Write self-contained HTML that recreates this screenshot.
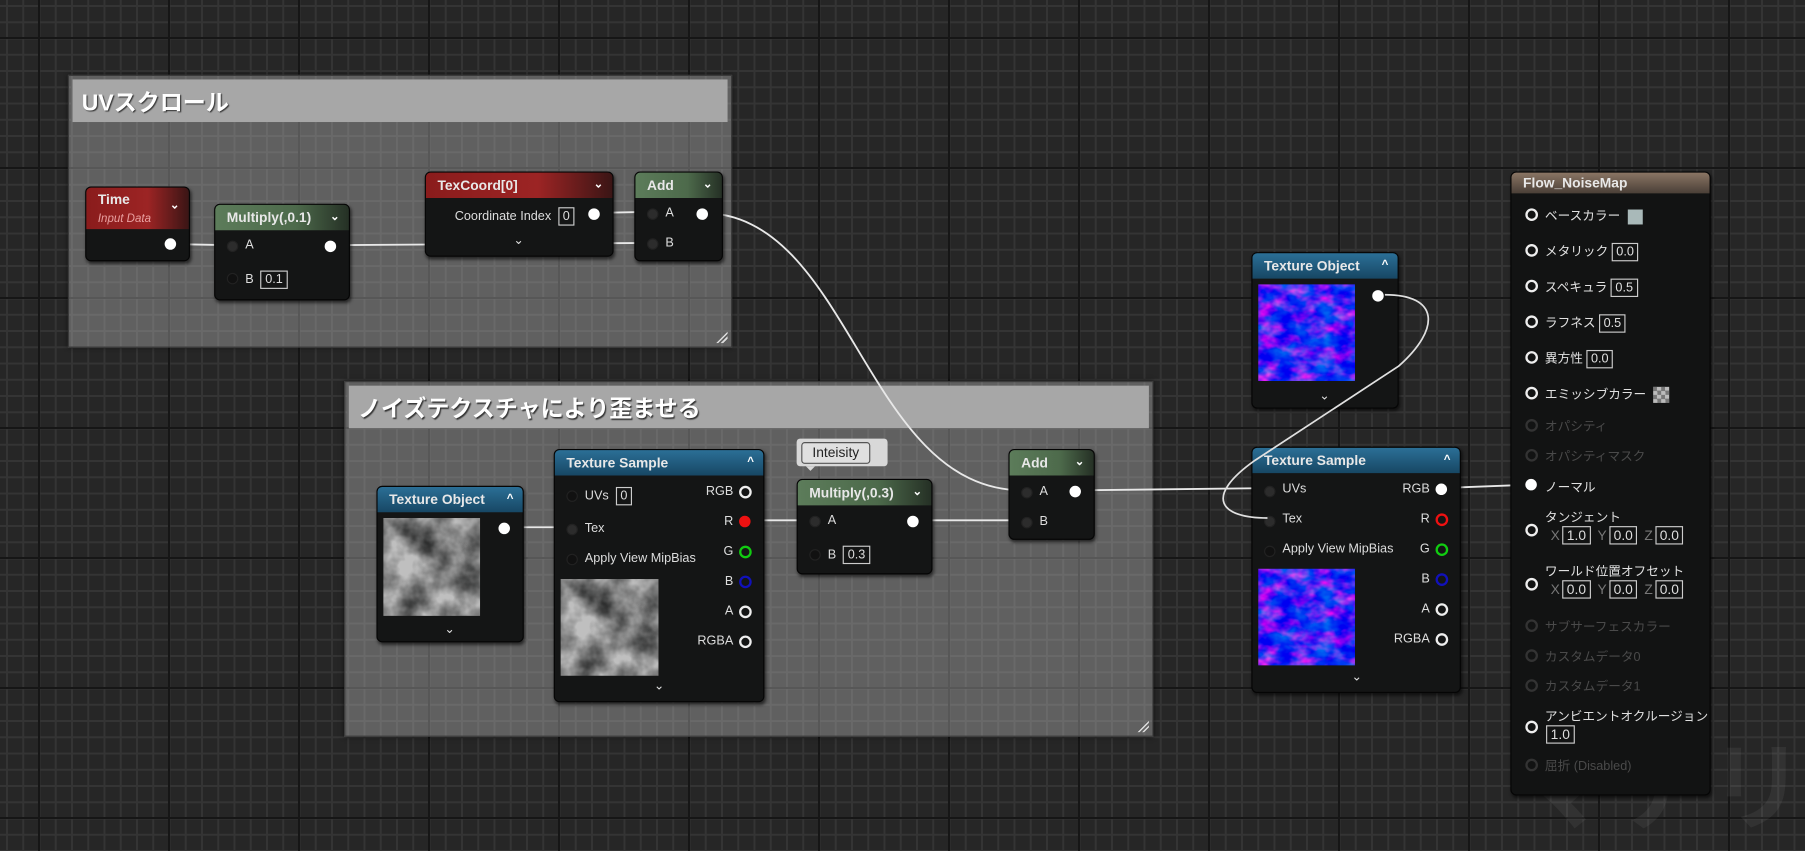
<!DOCTYPE html>
<html><head><meta charset="utf-8">
<style>
html,body{margin:0;padding:0;width:1805px;height:781px;overflow:hidden;}
body{background-color:#262626;
background-image:
linear-gradient(90deg,#161616 0 2px,transparent 2px),
linear-gradient(0deg,#161616 0 2px,transparent 2px),
linear-gradient(90deg,#343434 0 2px,transparent 2px),
linear-gradient(0deg,#343434 0 2px,transparent 2px);
background-size:130px 130px,130px 130px,16.25px 16.25px,16.25px 16.25px;
background-position:38px 0,0 39px,6px 0,0 7px;
font-family:"Liberation Sans","Noto Sans CJK JP",sans-serif;}
#w{position:absolute;left:0;top:0;width:1568px;height:678px;transform:scale(1.1512);transform-origin:0 0;}
.cm{position:absolute;background:rgba(185,185,185,0.4);border:1px solid #3a3a3a;box-shadow:0 0 4px rgba(0,0,0,.6);}
.cm .h{position:absolute;left:3px;right:3px;top:3px;background:#a7a7a7;color:#fff;font-weight:bold;font-size:20px;padding:4px 8px;text-shadow:1px 1px 1px #333;}
.cm .rs{position:absolute;right:3px;bottom:3px;width:10px;height:10px;background:linear-gradient(135deg,transparent 50%,#ddd 50%,#ddd 60%,transparent 60%,transparent 70%,#ddd 70%,#ddd 80%,transparent 80%);}
.n{position:absolute;background:#141515;border:1px solid #050505;border-radius:5px;box-shadow:1px 2px 3px rgba(0,0,0,.6);color:#ddd;font-size:11px;}
.n .t{height:22px;border-radius:4px 4px 0 0;color:#e8e8e8;font-weight:bold;font-size:12px;line-height:22px;padding-left:10px;position:relative;}
.red{background:linear-gradient(90deg,#8a1c1c,#9c2424 60%,#3a1515);}
.grn{background:linear-gradient(90deg,#5c7c5a,#4d6a4b 60%,#253025);}
.blu{background:linear-gradient(180deg,#2b6f96,#174764);}
.brn{background:linear-gradient(180deg,#8a7564,#4a3f37);}
.t .ar{position:absolute;right:8px;top:0;font-size:10px;color:#fff;}
.a{position:absolute;font-size:11px;color:#ddd;white-space:nowrap;}
.pi{position:absolute;width:8px;height:8px;border-radius:50%;background:#2c2c2c;border:1px solid #222;}
.po{position:absolute;width:7px;height:7px;border-radius:50%;border:2px solid #eee;}
.pf{position:absolute;width:10px;height:10px;border-radius:50%;background:#fff;}
.bx{display:inline-block;border:1px solid #ccc;padding:0 3px;line-height:14px;margin-left:3px;}
.chev{position:absolute;color:#ddd;font-size:11px;}
.fr{position:absolute;left:12px;font-size:11px;color:#e0e0e0;white-space:nowrap;}
.fr.d{color:#4a4a4a;}
.fr .po{left:0;top:2px}
.fr span.l{margin-left:17px}
.xyz{position:absolute;font-size:12px;color:#ddd;white-space:nowrap;}
.xyz i{font-style:normal;color:#777;margin:0 2px 0 6px}
.xyz .bx{margin-left:0}
</style></head><body>
<div id="w">
<svg width="0" height="0" style="position:absolute">
<filter id="gn" color-interpolation-filters="sRGB"><feTurbulence type="fractalNoise" baseFrequency="0.035" numOctaves="4" seed="3"/><feColorMatrix type="matrix" values="0 0 0 0 0.75 0 0 0 0 0.75 0 0 0 0 0.75 1.6 0 0 0 -0.2"/></filter>
<filter id="bn" color-interpolation-filters="sRGB"><feTurbulence type="fractalNoise" baseFrequency="0.06 0.09" numOctaves="3" seed="7"/><feColorMatrix type="matrix" values="2.4 0 0 0 -1.0 0 0.8 0 0 -0.25 0 0 0 0 0.95 0 0 0 0 1"/></filter>
</svg>

<div class="cm" style="left:59px;top:65px;width:575px;height:235px"><div class="h">UVスクロール</div><div class="rs"></div></div>
<div class="cm" style="left:299px;top:331px;width:701px;height:307px"><div class="h">ノイズテクスチャにより歪ませる</div><div class="rs"></div></div>

<!-- watermark -->
<div style="position:absolute;left:1316px;top:618px;font-size:84px;color:rgba(255,255,255,0.06);font-weight:bold;white-space:nowrap">マテリアル</div>

<svg style="position:absolute;left:0;top:0" width="1568" height="678" fill="none" stroke="#e8e8e8" stroke-width="1.6">
<path d="M148 212 L200 213"/>
<path d="M287 213 C400 213,450 211,566 211"/>
<path d="M516 185 L566 184"/>
<path d="M610 185 C740 185,750 426,889 426"/>
<path d="M438 458 L496 458"/>
<path d="M648 452 L707 452"/>
<path d="M793 452 L889 452"/>
<path d="M934 426 L1101 424"/>
<path d="M1252 424 L1329 421"/>
</svg>

<!-- Time -->
<div class="n" style="left:74px;top:162px;width:89px;height:63px">
<div class="t red" style="height:34px;line-height:16px;padding-top:2px">Time<br><span style="font-weight:normal;font-style:italic;font-size:10px;color:#e9a0a0">Input Data</span><span class="ar" style="top:8px">⌄</span></div>
<div class="pf" style="left:68px;top:44px"></div></div>

<!-- Multiply 0.1 -->
<div class="n" style="left:186px;top:177px;width:116px;height:82px">
<div class="t grn">Multiply(,0.1)<span class="ar">⌄</span></div>
<div class="pi" style="left:10px;top:31px"></div><div class="a" style="left:26px;top:29px">A</div>
<div class="pf" style="left:95px;top:31px"></div>
<div class="pi" style="left:10px;top:59px;background:#111"></div><div class="a" style="left:26px;top:57px">B <span class="bx">0.1</span></div></div>

<!-- TexCoord -->
<div class="n" style="left:369px;top:149px;width:162px;height:72px">
<div class="t red">TexCoord[0]<span class="ar">⌄</span></div>
<div class="a" style="left:25px;top:30px">Coordinate Index <span class="bx">0</span></div>
<div class="pf" style="left:141px;top:31px"></div><div class="chev" style="left:76px;top:52px">⌄</div></div>

<!-- Add 1 -->
<div class="n" style="left:551px;top:149px;width:75px;height:76px">
<div class="t grn">Add<span class="ar">⌄</span></div>
<div class="pi" style="left:10px;top:31px"></div><div class="a" style="left:26px;top:29px">A</div>
<div class="pf" style="left:53px;top:31px"></div>
<div class="pi" style="left:10px;top:57px"></div><div class="a" style="left:26px;top:55px">B</div></div>

<!-- Texture Object lower -->
<div class="n" style="left:327px;top:422px;width:126px;height:134px">
<div class="t blu">Texture Object<span class="ar">^</span></div>
<svg style="position:absolute;left:5px;top:27px" width="84" height="85"><rect width="84" height="85" filter="url(#gn)"/></svg>
<div class="pf" style="left:105px;top:31px"></div><div class="chev" style="left:58px;top:117px">⌄</div></div>

<!-- Texture Sample lower -->
<div class="n" style="left:481px;top:390px;width:181px;height:218px">
<div class="t blu">Texture Sample<span class="ar">^</span></div>
<div class="pi" style="left:10px;top:35px;background:#111"></div><div class="a" style="left:26px;top:32px">UVs <span class="bx">0</span></div>
<div class="pi" style="left:10px;top:64px"></div><div class="a" style="left:26px;top:62px">Tex</div>
<div class="pi" style="left:10px;top:90px;background:#111"></div><div class="a" style="left:26px;top:88px">Apply View MipBias</div>
<div class="a" style="right:26px;top:30px">RGB</div><div class="po" style="left:160px;top:31px"></div>
<div class="a" style="right:26px;top:56px">R</div><div class="pf" style="left:160px;top:57px;background:#e11"></div>
<div class="a" style="right:26px;top:82px">G</div><div class="po" style="left:160px;top:83px;border-color:#1c1"></div>
<div class="a" style="right:26px;top:108px">B</div><div class="po" style="left:160px;top:109px;border-color:#11b"></div>
<div class="a" style="right:26px;top:134px">A</div><div class="po" style="left:160px;top:135px"></div>
<div class="a" style="right:26px;top:160px">RGBA</div><div class="po" style="left:160px;top:161px"></div>
<svg style="position:absolute;left:5px;top:112px" width="85" height="84"><rect width="85" height="84" filter="url(#gn)"/></svg>
<div class="chev" style="left:86px;top:198px">⌄</div></div>

<!-- Inteisity bubble -->
<div style="position:absolute;left:692px;top:381px;width:79px;height:24px;background:#d8d8d8;border-radius:3px"></div>
<div style="position:absolute;left:696px;top:384px;width:58px;height:17px;border:1px solid #555;border-radius:3px;background:#e0e0e0;font-size:12px;color:#222;text-align:center;line-height:17px">Inteisity</div>
<div style="position:absolute;left:700px;top:405px;border:4px solid transparent;border-top-color:#d8d8d8"></div>

<!-- Multiply 0.3 -->
<div class="n" style="left:692px;top:416px;width:116px;height:81px">
<div class="t grn">Multiply(,0.3)<span class="ar">⌄</span></div>
<div class="pi" style="left:10px;top:31px"></div><div class="a" style="left:26px;top:29px">A</div>
<div class="pf" style="left:95px;top:31px"></div>
<div class="pi" style="left:10px;top:60px;background:#111"></div><div class="a" style="left:26px;top:57px">B <span class="bx">0.3</span></div></div>

<!-- Add 2 -->
<div class="n" style="left:876px;top:390px;width:73px;height:77px">
<div class="t grn">Add<span class="ar">⌄</span></div>
<div class="pi" style="left:10px;top:32px"></div><div class="a" style="left:26px;top:30px">A</div>
<div class="pf" style="left:52px;top:31px"></div>
<div class="pi" style="left:10px;top:58px"></div><div class="a" style="left:26px;top:56px">B</div></div>

<!-- Texture Object right -->
<div class="n" style="left:1087px;top:219px;width:126px;height:134px">
<div class="t blu">Texture Object<span class="ar">^</span></div>
<svg style="position:absolute;left:5px;top:27px" width="84" height="84"><rect width="84" height="84" filter="url(#bn)"/></svg>
<div class="pf" style="left:104px;top:32px"></div><div class="chev" style="left:58px;top:117px">⌄</div></div>

<!-- Texture Sample right -->
<div class="n" style="left:1087px;top:388px;width:180px;height:212px">
<div class="t blu">Texture Sample<span class="ar">^</span></div>
<div class="pi" style="left:10px;top:33px"></div><div class="a" style="left:26px;top:30px">UVs</div>
<div class="pi" style="left:10px;top:59px"></div><div class="a" style="left:26px;top:56px">Tex</div>
<div class="pi" style="left:10px;top:85px;background:#111"></div><div class="a" style="left:26px;top:82px">Apply View MipBias</div>
<div class="a" style="right:26px;top:30px">RGB</div><div class="pf" style="left:159px;top:31px"></div>
<div class="a" style="right:26px;top:56px">R</div><div class="po" style="left:159px;top:57px;border-color:#e11"></div>
<div class="a" style="right:26px;top:82px">G</div><div class="po" style="left:159px;top:83px;border-color:#1c1"></div>
<div class="a" style="right:26px;top:108px">B</div><div class="po" style="left:159px;top:109px;border-color:#11b"></div>
<div class="a" style="right:26px;top:134px">A</div><div class="po" style="left:159px;top:135px"></div>
<div class="a" style="right:26px;top:160px">RGBA</div><div class="po" style="left:159px;top:161px"></div>
<svg style="position:absolute;left:5px;top:105px" width="84" height="84"><rect width="84" height="84" filter="url(#bn)"/></svg>
<div class="chev" style="left:86px;top:192px">⌄</div></div>

<!-- loop wire drawn over nodes -->
<svg style="position:absolute;left:0;top:0" width="1568" height="678" fill="none" stroke="#e0e0e0" stroke-width="1.5">
<path d="M1203 256 C1250 256 1252 285 1215 318 L1090 400 C1045 432 1060 450 1101 450"/>
</svg>

<!-- Flow_NoiseMap -->
<div class="n" style="left:1312px;top:149px;width:172px;height:540px;background:#121313">
<div class="t brn" style="height:18px;line-height:18px">Flow_NoiseMap</div>
<div class="fr" style="top:29px"><div class="po"></div><span class="l">ベースカラー</span> <span style="display:inline-block;width:13px;height:13px;background:#a9b9b9;vertical-align:middle;margin-left:3px"></span></div>
<div class="fr" style="top:60px"><div class="po"></div><span class="l">メタリック</span><span class="bx">0.0</span></div>
<div class="fr" style="top:91px"><div class="po"></div><span class="l">スペキュラ</span><span class="bx">0.5</span></div>
<div class="fr" style="top:122px"><div class="po"></div><span class="l">ラフネス</span><span class="bx">0.5</span></div>
<div class="fr" style="top:153px"><div class="po"></div><span class="l">異方性</span><span class="bx">0.0</span></div>
<div class="fr" style="top:184px"><div class="po"></div><span class="l">エミッシブカラー</span> <span style="display:inline-block;width:14px;height:14px;background:repeating-conic-gradient(#bbb 0 25%,#777 0 50%) 0 0/7px 7px;vertical-align:middle;margin-left:3px"></span></div>
<div class="fr d" style="top:212px"><div class="po" style="border-color:#333"></div><span class="l">オパシティ</span></div>
<div class="fr d" style="top:238px"><div class="po" style="border-color:#333"></div><span class="l">オパシティマスク</span></div>
<div class="fr" style="top:265px"><div class="pf" style="left:0;top:1px"></div><span class="l">ノーマル</span></div>
<div class="fr" style="top:291px"><span class="l">タンジェント</span></div><div class="po" style="left:12px;top:305px"></div>
<div class="xyz" style="left:28px;top:307px"><i>X</i><span class="bx">1.0</span><i>Y</i><span class="bx">0.0</span><i>Z</i><span class="bx">0.0</span></div>
<div class="fr" style="top:338px"><span class="l">ワールド位置オフセット</span></div><div class="po" style="left:12px;top:352px"></div>
<div class="xyz" style="left:28px;top:354px"><i>X</i><span class="bx">0.0</span><i>Y</i><span class="bx">0.0</span><i>Z</i><span class="bx">0.0</span></div>
<div class="fr d" style="top:386px"><div class="po" style="border-color:#333"></div><span class="l">サブサーフェスカラー</span></div>
<div class="fr d" style="top:412px"><div class="po" style="border-color:#333"></div><span class="l">カスタムデータ0</span></div>
<div class="fr d" style="top:438px"><div class="po" style="border-color:#333"></div><span class="l">カスタムデータ1</span></div>
<div class="fr" style="top:464px"><span class="l">アンビエントオクルージョン</span></div><div class="po" style="left:12px;top:476px"></div>
<div class="xyz" style="left:30px;top:480px"><span class="bx">1.0</span></div>
<div class="fr d" style="top:507px"><div class="po" style="border-color:#333"></div><span class="l">屈折 (Disabled)</span></div>
</div>
</div>
</body></html>
